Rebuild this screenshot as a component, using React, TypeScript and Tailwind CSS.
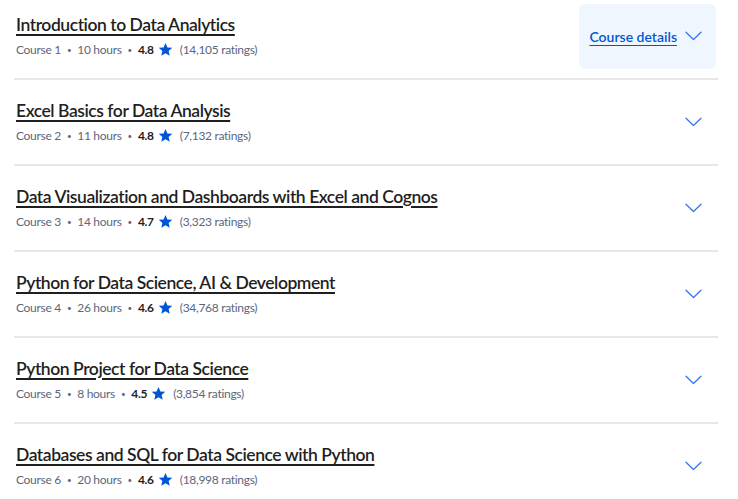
import React from "react";

const courses = [
  { title: "Introduction to Data Analytics", n: 1, hours: "10 hours", rating: "4.8", count: "(14,105 ratings)" },
  { title: "Excel Basics for Data Analysis", n: 2, hours: "11 hours", rating: "4.8", count: "(7,132 ratings)" },
  { title: "Data Visualization and Dashboards with Excel and Cognos", n: 3, hours: "14 hours", rating: "4.7", count: "(3,323 ratings)" },
  { title: "Python for Data Science, AI & Development", n: 4, hours: "26 hours", rating: "4.6", count: "(34,768 ratings)" },
  { title: "Python Project for Data Science", n: 5, hours: "8 hours", rating: "4.5", count: "(3,854 ratings)" },
  { title: "Databases and SQL for Data Science with Python", n: 6, hours: "20 hours", rating: "4.6", count: "(18,998 ratings)" },
];

function Chevron() {
  return (
    <svg width="17" height="10" viewBox="0 0 17 10" fill="none">
      <path d="M1 1.2 L8.5 8.5 L16 1.2" stroke="#3a78e0" strokeWidth="1.3" strokeLinecap="round" strokeLinejoin="round" />
    </svg>
  );
}

function Star() {
  return (
    <svg width="15" height="15" viewBox="0 0 24 24">
      <path d="M12 1.5l3.1 7.1 7.7.7-5.8 5.1 1.7 7.6L12 18l-6.7 4 1.7-7.6-5.8-5.1 7.7-.7z" fill="#0056d2" />
    </svg>
  );
}

export default function App() {
  return (
    <div className="w-[738px] h-[499px] overflow-hidden bg-white" style={{ fontFamily: "Lato, 'Noto Sans', sans-serif" }}>
      <div className="mt-[-6px] ml-[14px] w-[704px]">
        {courses.map((c, i) => (
          <div key={c.n} className="flex items-center justify-between h-[86px] border-b-2 border-[#e8e8e8]">
            <div className="pl-[2px] flex flex-col gap-[3px]">
              <a className="text-[17.5px] leading-[24px] tracking-[-0.45px] font-semibold text-[#1f1f1f] underline decoration-[1.5px] underline-offset-[3px]">
                {c.title}
              </a>
              <div className="flex items-center text-[12px] leading-[20px] tracking-[-0.3px] text-[#5b6780]">
                <span>Course {c.n}</span>
                <span className="mx-[6px] text-[8px]">•</span>
                <span>{c.hours}</span>
                <span className="mx-[6px] text-[8px]">•</span>
                <span className="font-bold text-[#1f1f1f]">{c.rating}</span>
                <span className="ml-[4px] mr-[7px] flex items-center"><Star /></span>
                <span>{c.count}</span>
              </div>
            </div>
            <div className={"mr-[2px] w-[137px] h-[65px] rounded-md flex items-center justify-end pr-[14px] gap-[8px] " + (i === 0 ? "bg-[#f0f6ff]" : "")}>
              {i === 0 && (
                <span className="text-[14px] font-semibold text-[#0056d2] underline underline-offset-[3px]">Course details</span>
              )}
              <Chevron />
            </div>
          </div>
        ))}
      </div>
    </div>
  );
}
